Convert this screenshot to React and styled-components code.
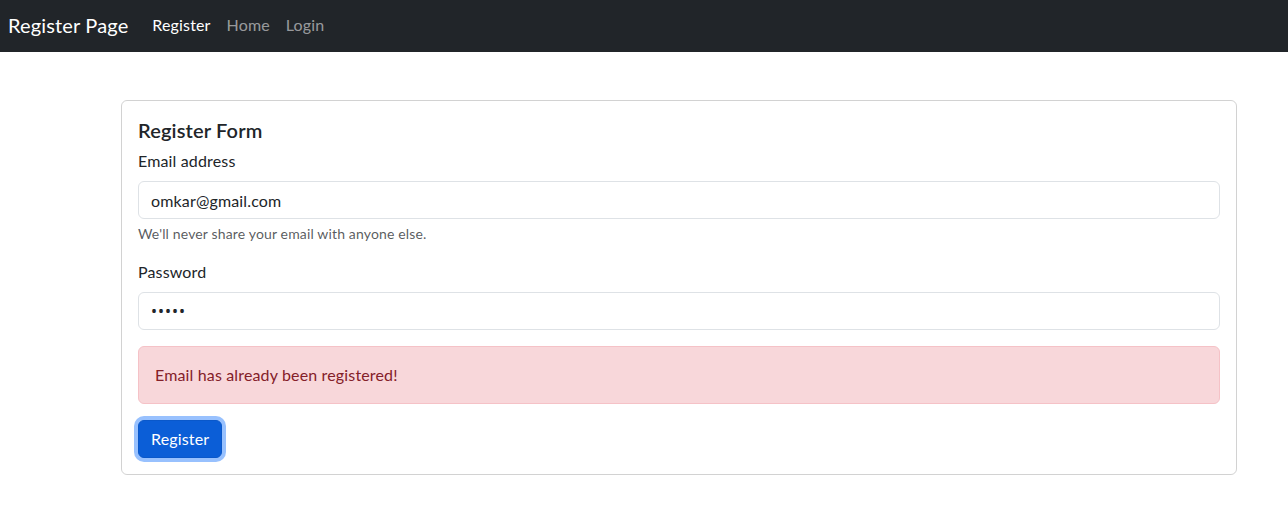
import React from "react";
import styled, { createGlobalStyle } from "styled-components";

const Global = createGlobalStyle`
  * { box-sizing: border-box; }
  body {
    margin: 0;
    font-family: "Lato", "Noto Sans", sans-serif;
    font-size: 16px;
    line-height: 1.5;
    letter-spacing: 0.15px;
    color: #212529;
    background: #fff;
  }
`;

const Navbar = styled.nav`
  height: 52px;
  background: #212529;
  display: flex;
  align-items: center;
  padding: 0 8px 2px;
`;

const Brand = styled.a`
  font-size: 20px;
  color: #fff;
  margin-right: 16px;
  text-decoration: none;
  line-height: 30px;
`;

const NavLink = styled.a`
  padding: 0 8px;
  color: ${(p) => (p.$active ? "#fff" : "rgba(255,255,255,0.55)")};
  text-decoration: none;
`;

const Main = styled.main`
  padding: 48px 0 0 121px;
`;

const Card = styled.div`
  width: 1116px;
  border: 1px solid rgba(0, 0, 0, 0.175);
  border-radius: 6px;
  padding: 16px;
`;

const Title = styled.h5`
  margin: 0 0 7px;
  padding-top: 1px;
  font-size: 20px;
  font-weight: 600;
  line-height: 1.2;
`;

const Group = styled.div`
  margin-bottom: 16px;
`;

const Label = styled.label`
  display: block;
  margin-bottom: 8px;
`;

const Input = styled.input`
  display: block;
  width: 100%;
  height: 38px;
  padding: 6px 12px;
  font: inherit;
  letter-spacing: inherit;
  color: #212529;
  border: 1px solid #dee2e6;
  border-radius: 6px;
  outline: none;
  &[type="password"] {
    font-family: "Noto Sans", sans-serif;
    letter-spacing: 1px;
  }
`;

const Help = styled.div`
  margin-top: 4px;
  font-size: 14px;
  color: rgba(33, 37, 41, 0.75);
`;

const Alert = styled.div`
  padding: 16px;
  margin-bottom: 16px;
  background: #f8d7da;
  border: 1px solid #f5c2c7;
  border-radius: 6px;
  color: #842029;
`;

const Button = styled.button`
  font: inherit;
  letter-spacing: inherit;
  color: #fff;
  background: #0b5ed7;
  border: 1px solid #0a58ca;
  border-radius: 6px;
  padding: 6px 12px;
  box-shadow: 0 0 0 4px rgba(49, 132, 253, 0.5);
`;

export default function App() {
  return (
    <>
      <Global />
      <Navbar>
        <Brand href="#">Register Page</Brand>
        <NavLink href="#" $active>Register</NavLink>
        <NavLink href="#">Home</NavLink>
        <NavLink href="#">Login</NavLink>
      </Navbar>
      <Main>
        <Card>
          <Title>Register Form</Title>
          <Group>
            <Label>Email address</Label>
            <Input type="email" defaultValue="omkar@gmail.com" />
            <Help>We'll never share your email with anyone else.</Help>
          </Group>
          <Group>
            <Label>Password</Label>
            <Input type="password" defaultValue="12345" />
          </Group>
          <Alert>Email has already been registered!</Alert>
          <Button>Register</Button>
        </Card>
      </Main>
    </>
  );
}
